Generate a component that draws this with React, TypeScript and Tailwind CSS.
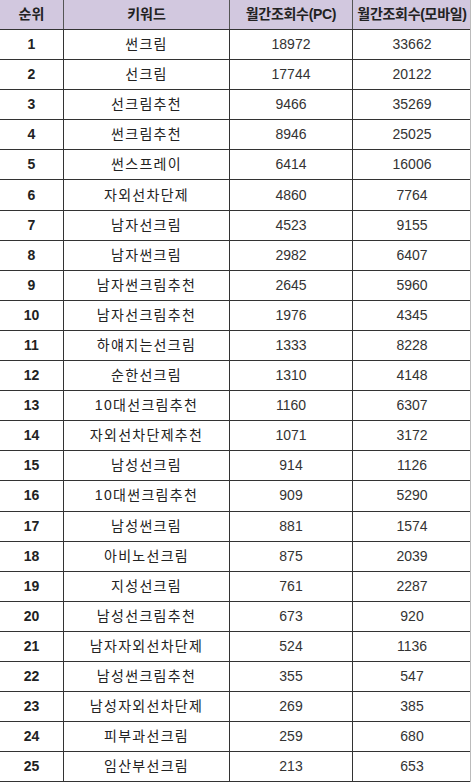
const rows: [number, string, number, number][] = [
  [1, '썬크림', 18972, 33662],
  [2, '선크림', 17744, 20122],
  [3, '선크림추천', 9466, 35269],
  [4, '썬크림추천', 8946, 25025],
  [5, '썬스프레이', 6414, 16006],
  [6, '자외선차단제', 4860, 7764],
  [7, '남자선크림', 4523, 9155],
  [8, '남자썬크림', 2982, 6407],
  [9, '남자썬크림추천', 2645, 5960],
  [10, '남자선크림추천', 1976, 4345],
  [11, '하얘지는선크림', 1333, 8228],
  [12, '순한선크림', 1310, 4148],
  [13, '10대선크림추천', 1160, 6307],
  [14, '자외선차단제추천', 1071, 3172],
  [15, '남성선크림', 914, 1126],
  [16, '10대썬크림추천', 909, 5290],
  [17, '남성썬크림', 881, 1574],
  [18, '아비노선크림', 875, 2039],
  [19, '지성선크림', 761, 2287],
  [20, '남성선크림추천', 673, 920],
  [21, '남자자외선차단제', 524, 1136],
  [22, '남성썬크림추천', 355, 547],
  [23, '남성자외선차단제', 269, 385],
  [24, '피부과선크림', 259, 680],
  [25, '임산부선크림', 213, 653],
];

const font = { fontFamily: '"Liberation Sans", "Noto Sans CJK KR", sans-serif' };

export default function App() {
  return (
    <div className="w-[474px] h-[783px] overflow-hidden bg-white text-[#222]" style={font}>
      <div className="w-[471px] border-r border-[#bbb]">
        {/* Header */}
        <div className="grid grid-cols-[64px_166px_123px_118px] h-[30px] bg-[#d2c8df] border-b border-[#333] text-[14px] font-bold">
          <div className="flex items-center justify-center border-r border-[#555]">순위</div>
          <div className="flex items-center justify-center border-r border-[#555]">키워드</div>
          <div className="flex items-center justify-center border-r border-[#555] tracking-[-0.3px]">월간조회수(PC)</div>
          <div className="flex items-center justify-center tracking-[-0.3px]">월간조회수(모바일)</div>
        </div>

        {/* Body */}
        {rows.map(([rank, keyword, pc, mobile]) => (
          <div
            key={rank}
            className="grid grid-cols-[64px_166px_123px_118px] h-[30.1px] border-b border-[#333] text-[14px]"
          >
            <div className="flex items-center justify-center border-r border-[#333] font-bold">{rank}</div>
            <div className="flex items-center justify-center border-r border-[#333] text-[#222] tracking-[1.3px]">{keyword}</div>
            <div className="flex items-center justify-center border-r border-[#333] text-[#333]">{pc}</div>
            <div className="flex items-center justify-center text-[#333]">{mobile}</div>
          </div>
        ))}
      </div>
    </div>
  );
}
